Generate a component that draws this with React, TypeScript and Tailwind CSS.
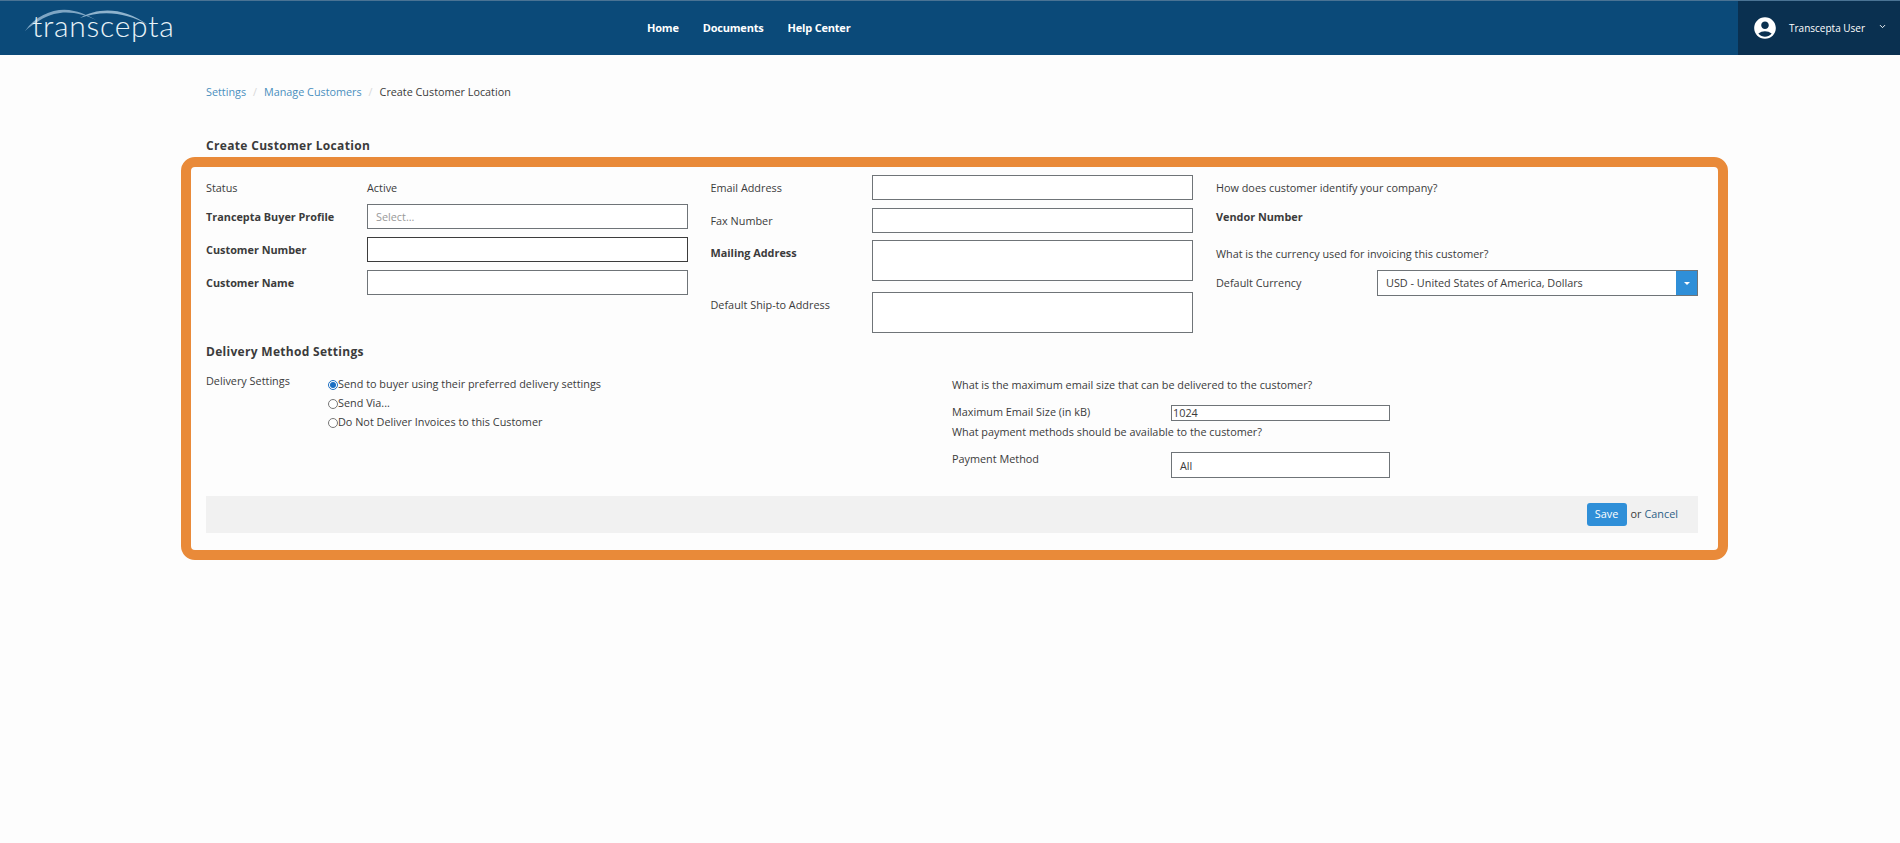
import { ChevronDown } from "lucide-react";
import { MdAccountCircle } from "react-icons/md";

const fieldCls = "block w-[321px] h-[25px] border bg-white px-2 text-[10.85px] outline-none";
const inputCls = fieldCls + " border-[#6f7478]";

function Logo() {
	return (
		<div className="relative w-[150px] h-[44px]">
			<svg className="absolute left-0 -top-[3px]" width="150" height="44" viewBox="0 0 150 44" fill="none">
				<path d="M1 30 C 14 12, 34 6, 50 10 C 60 12, 66 16, 72 19 C 60 13, 44 9, 30 13 C 20 16, 10 22, 1 30 Z" fill="#7fa6c4" />
				<path d="M56 17 C 74 6, 100 6, 124 24 C 102 11, 78 9, 56 17 Z" fill="#8fb3cd" />
			</svg>
			<span className="absolute left-[8px] top-[3px] font-['Lato',sans-serif] font-light text-[30px] leading-[36px] tracking-[0.75px] text-[#e8f3f8]">transcepta</span>
		</div>
	);
}

function Header() {
	return (
		<header className="flex h-[55px] bg-[#0b4a79] border-t border-[#4a7394]">
			<div className="w-[647px] pl-[24px] pt-[3px]">
				<Logo />
			</div>
			<nav className="flex-1 flex items-center gap-6 pt-[1px] text-[11px] font-bold text-white tracking-[-0.2px]">
				<a>Home</a>
				<a>Documents</a>
				<a>Help Center</a>
			</nav>
			<div className="w-[162px] bg-[#0a3050] flex items-center pl-[14px] text-white">
				<MdAccountCircle size={26} />
				<span className="ml-[11px] text-[10px] whitespace-nowrap">Transcepta User</span>
				<ChevronDown size={9} strokeWidth={2.5} className="ml-[13px] -mt-[3px]" />
			</div>
		</header>
	);
}

function Breadcrumb() {
	return (
		<div className="flex items-center h-[18px] text-[10.8px]">
			<a className="text-[#4a8fbd]">Settings</a>
			<span className="mx-[7px] text-[#d8d8d8]">/</span>
			<a className="text-[#4a8fbd]">Manage Customers</a>
			<span className="mx-[7px] text-[#d8d8d8]">/</span>
			<span className="text-[#3b3b3b]">Create Customer Location</span>
		</div>
	);
}

function Row({ label, bold, className, children }: { label: string; bold?: boolean; className?: string; children?: React.ReactNode }) {
	return (
		<div className={"flex " + (className ?? "")}>
			<div className={"w-[161px] shrink-0 leading-[25px] " + (bold ? "font-bold" : "")}>{label}</div>
			{children}
		</div>
	);
}

function TopForm() {
	return (
		<div className="grid grid-cols-[482px_483px_483px] gap-x-[22.5px]">
			<div>
				<Row label="Status">
					<span className="leading-[25px]">Active</span>
				</Row>
				<Row label="Trancepta Buyer Profile" bold className="mt-[4px]">
					<div className={inputCls + " leading-[24px] text-[#999]"}>Select...</div>
				</Row>
				<Row label="Customer Number" bold className="mt-[8px]">
					<input className={fieldCls + " border-[#3c3c3c]"} />
				</Row>
				<Row label="Customer Name" bold className="mt-[8px]">
					<input className={inputCls} />
				</Row>
			</div>
			<div>
				<Row label="Email Address">
					<input className={inputCls} />
				</Row>
				<Row label="Fax Number" className="mt-[8px]">
					<input className={inputCls} />
				</Row>
				<Row label="Mailing Address" bold className="mt-[7px]">
					<textarea className={inputCls + " h-[41px] resize-none"} />
				</Row>
				<Row label="Default Ship-to Address" className="mt-[11px]">
					<textarea className={inputCls + " h-[41px] resize-none"} />
				</Row>
			</div>
			<div>
				<div className="leading-[25px]">How does customer identify your company?</div>
				<div className="mt-[4px] leading-[25px] font-bold">Vendor Number</div>
				<div className="mt-[12px] leading-[25px]">What is the currency used for invoicing this customer?</div>
				<Row label="Default Currency" className="mt-[4px]">
					<div className="flex w-[321px] h-[26px] border border-[#6f7478] bg-white">
						<span className="flex-1 pl-2 leading-[24px]">USD - United States of America, Dollars</span>
						<span className="w-[21px] bg-[#2f8fd8] flex items-center justify-center">
							<span className="border-x-[3px] border-x-transparent border-t-[3px] border-t-white" />
						</span>
					</div>
				</Row>
			</div>
		</div>
	);
}

function Radio({ label, checked }: { label: string; checked?: boolean }) {
	return (
		<label className="flex items-center h-[19px]">
			<input type="radio" name="delivery" defaultChecked={checked} className="m-0 w-[10px] h-[10px] accent-[#1b6ec2]" />
			{label}
		</label>
	);
}

function DeliverySection() {
	return (
		<div className="mt-[10px]">
			<h3 className="text-[12px] font-bold tracking-[0.3px] leading-[18px]">Delivery Method Settings</h3>
			<div className="flex mt-[10px]">
				<div className="w-[122px] shrink-0 leading-[20px]">Delivery Settings</div>
				<div className="w-[624px] shrink-0 pt-[4px]">
					<Radio label="Send to buyer using their preferred delivery settings" checked />
					<Radio label="Send Via..." />
					<Radio label="Do Not Deliver Invoices to this Customer" />
				</div>
				<div className="flex-1 pt-[4px]">
					<div className="leading-[20px]">What is the maximum email size that can be delivered to the customer?</div>
					<div className="flex mt-[10px]">
						<div className="w-[219px] leading-[14px]">Maximum Email Size (in kB)</div>
						<input defaultValue="1024" className="w-[219px] h-[16px] border border-[#6f7478] bg-white px-[1px] text-[10.85px] outline-none" />
					</div>
					<div className="leading-[20px] mt-[1px]">What payment methods should be available to the customer?</div>
					<div className="flex mt-[10px]">
						<div className="w-[219px] leading-[14px]">Payment Method</div>
						<div className="w-[219px] h-[26px] border border-[#6f7478] bg-white pl-2 leading-[26px]">All</div>
					</div>
				</div>
			</div>
		</div>
	);
}

export default function App() {
	return (
		<div className="min-h-[843px] bg-[#fdfdfd] text-[#3b3b3b] text-[10.85px] font-['Open_Sans',sans-serif]">
			<Header />
			<main className="pl-[181px] w-[1728px]">
				<div className="pl-[25px] pt-[28px]">
					<Breadcrumb />
					<h2 className="mt-[36px] text-[12px] font-bold tracking-[0.33px] leading-[18px]">Create Customer Location</h2>
				</div>
				<section className="mt-[2px] h-[403px] border-[10px] border-[#e98a39] rounded-[14px] bg-[#fdfdfd] pl-[15px] pr-[20px] pt-[8px]">
					<TopForm />
					<DeliverySection />
					<div className="mt-[18px] h-[37px] bg-[#f1f1f1] flex items-center justify-end pr-[20px]">
						<button className="w-[40px] h-[23px] rounded-[3px] bg-[#2f8fd8] text-white">Save</button>
						<span className="ml-[4px]">or</span>
						<a className="ml-[3px] text-[#2d5f86]">Cancel</a>
					</div>
				</section>
			</main>
		</div>
	);
}
